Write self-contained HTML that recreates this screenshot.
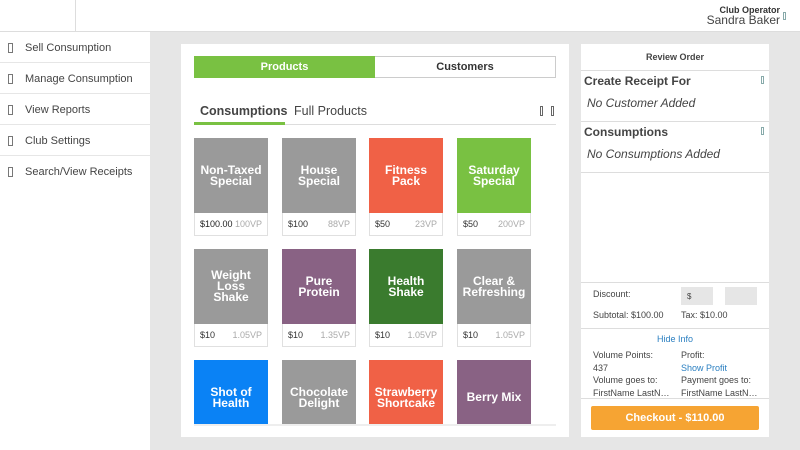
<!DOCTYPE html>
<html><head><style>
*{box-sizing:border-box;margin:0;padding:0}
body{width:800px;height:450px;overflow:hidden;background:#e6e6e6;font-family:"Liberation Sans",sans-serif;position:relative;color:#333}
.abs{position:absolute}
#hdr{left:0;top:0;width:800px;height:32px;background:#fff;border-bottom:1px solid #ddd}
#side{left:0;top:32px;width:150px;height:418px;background:#fff}
.si{height:31px;border-bottom:1px solid #e6e6e6;font-size:11px;color:#444;line-height:33px;padding-left:25px;position:relative}
.si:before{content:"";position:absolute;left:8px;top:11px;width:3px;height:8px;border:1px solid #777}
.panel{background:#fff}
.tile{position:absolute;width:74px}
.tile .im{height:75px;color:#fff;font-weight:bold;font-size:12px;line-height:11px;display:flex;align-items:center;justify-content:center;text-align:center}
.tile .ft{height:23px;border:1px solid #e0e0e0;border-top:none;font-size:9px;display:flex;justify-content:space-between;align-items:center;padding:0 5px}
.tile .ft span:last-child{color:#aaa}
.g{background:#9a9a9a}.r{background:#f06146}.gr{background:#79c142}.p{background:#896284}.dg{background:#3a7b2e}.b{background:#0a82f5}
.sec{border-bottom:1px solid #ddd}
.ico{position:absolute;width:3px;height:8px;border:1px solid #8aa}
</style></head><body>
<div id="hdr" class="abs">
 <div class="abs" style="left:75px;top:0;width:1px;height:32px;background:#ddd"></div>
 <div class="abs" style="right:20px;top:5px;text-align:right;line-height:10px"><div style="font-size:9px;font-weight:bold">Club Operator</div><div style="font-size:12px;color:#444">Sandra Baker</div></div>
 <div class="ico" style="left:783px;top:12px"></div>
</div>
<div id="side" class="abs">
 <div class="si">Sell Consumption</div><div class="si">Manage Consumption</div><div class="si">View Reports</div><div class="si">Club Settings</div><div class="si" style="border:none">Search/View Receipts</div>
</div>
<div class="abs panel" style="left:181px;top:44px;width:388px;height:393px;overflow:hidden">
 <div class="abs" style="left:13px;top:12px;width:362px;height:22px;border:1px solid #ccc;font-size:11px;font-weight:bold;display:flex">
  <div style="width:181px;background:#79c142;color:#fff;text-align:center;line-height:22px;margin:-1px 0 -1px -1px;height:22px">Products</div>
  <div style="flex:1;text-align:center;line-height:21px">Customers</div>
 </div>
 <div class="abs" style="left:19px;top:60px;font-size:12.5px;font-weight:bold;color:#444">Consumptions</div>
 <div class="abs" style="left:113px;top:60px;font-size:12.5px;color:#444">Full Products</div>
 <div class="ico" style="left:359px;top:62px;height:10px;border-color:#666"></div>
 <div class="ico" style="left:370px;top:62px;height:10px;border-color:#666"></div>
 <div class="abs" style="left:13px;top:80px;width:362px;height:1px;background:#ddd"></div>
 <div class="abs" style="left:13px;top:78px;width:91px;height:3px;background:#79c142"></div>
 <div class="tile" style="left:13px;top:94px"><div class="im g">Non-Taxed<br>Special</div><div class="ft"><span style="color:#222">$100.00</span><span>100VP</span></div></div>
 <div class="tile" style="left:101px;top:94px"><div class="im g">House<br>Special</div><div class="ft"><span>$100</span><span>88VP</span></div></div>
 <div class="tile" style="left:188px;top:94px"><div class="im r">Fitness<br>Pack</div><div class="ft"><span>$50</span><span>23VP</span></div></div>
 <div class="tile" style="left:276px;top:94px"><div class="im gr">Saturday<br>Special</div><div class="ft"><span>$50</span><span>200VP</span></div></div>
 <div class="tile" style="left:13px;top:205px"><div class="im g">Weight<br>Loss<br>Shake</div><div class="ft"><span>$10</span><span>1.05VP</span></div></div>
 <div class="tile" style="left:101px;top:205px"><div class="im p">Pure<br>Protein</div><div class="ft"><span>$10</span><span>1.35VP</span></div></div>
 <div class="tile" style="left:188px;top:205px"><div class="im dg">Health<br>Shake</div><div class="ft"><span>$10</span><span>1.05VP</span></div></div>
 <div class="tile" style="left:276px;top:205px"><div class="im g">Clear &amp;<br>Refreshing</div><div class="ft"><span>$10</span><span>1.05VP</span></div></div>
 <div class="tile" style="left:13px;top:316px"><div class="im b">Shot of<br>Health</div></div>
 <div class="tile" style="left:101px;top:316px"><div class="im g">Chocolate<br>Delight</div></div>
 <div class="tile" style="left:188px;top:316px"><div class="im r">Strawberry<br>Shortcake</div></div>
 <div class="tile" style="left:276px;top:316px"><div class="im p">Berry Mix</div></div>
 <div class="abs" style="left:13px;top:380px;width:362px;height:13px;background:#fff;border-top:2px solid #eee"></div>
</div>
<div class="abs panel" style="left:581px;top:44px;width:188px;height:393px">
 <div class="sec" style="height:27px;text-align:center;font-size:9px;font-weight:bold;line-height:27px;color:#444">Review Order</div>
 <div class="sec" style="height:51px;position:relative"><div style="font-size:12px;font-weight:bold;padding:3px 3px;color:#444">Create Receipt For</div><div style="font-size:12px;font-style:italic;padding:5px 6px;color:#444">No Customer Added</div><div class="ico" style="left:180px;top:5px"></div></div>
 <div class="sec" style="height:51px;position:relative"><div style="font-size:12px;font-weight:bold;padding:3px 3px;color:#444">Consumptions</div><div style="font-size:12px;font-style:italic;padding:5px 6px;color:#444">No Consumptions Added</div><div class="ico" style="left:180px;top:5px"></div></div>
 <div class="sec" style="height:110px"></div>
 <div class="sec" style="height:46px;position:relative;font-size:9px;color:#444">
  <div class="abs" style="left:12px;top:6px">Discount:</div>
  <div class="abs" style="left:100px;top:4px;width:32px;height:18px;background:#e6e6e6;padding:5px 6px;font-size:8px">$</div>
  <div class="abs" style="left:144px;top:4px;width:32px;height:18px;background:#e6e6e6"></div>
  <div class="abs" style="left:12px;top:27px">Subtotal: $100.00</div>
  <div class="abs" style="left:100px;top:27px">Tax: $10.00</div>
 </div>
 <div class="sec" style="height:70px;position:relative;font-size:9px;color:#444;line-height:12.5px">
  <div style="text-align:center;color:#2a7fc1;padding-top:4px">Hide Info</div>
  <div class="abs" style="left:12px;top:20px">Volume Points:<br>437<br>Volume goes to:<br>FirstName LastN…</div>
  <div class="abs" style="left:100px;top:20px">Profit:<br><span style="color:#2a7fc1">Show Profit</span><br>Payment goes to:<br>FirstName LastN…</div>
 </div>
 <div class="abs" style="left:10px;top:362px;width:168px;height:24px;background:#f6a433;border-radius:2px;color:#fff;font-size:11px;font-weight:bold;text-align:center;line-height:24px">Checkout - $110.00</div>
</div>
</body></html>
